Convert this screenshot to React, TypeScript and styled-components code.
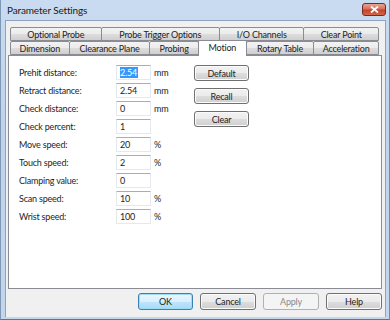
import styled, { createGlobalStyle } from 'styled-components'

const Global = createGlobalStyle`
  html, body {
    margin: 0;
    padding: 0;
    background: #c4d6ec;
  }
  body {
    width: 390px;
    height: 320px;
    overflow: hidden;
    font-family: Lato, 'Liberation Sans', sans-serif;
    font-size: 9px;
    letter-spacing: -0.2px;
    color: #1e1e1e;
  }
`

const Window = styled.div`
  width: 390px;
  height: 320px;
  box-sizing: border-box;
  display: flex;
  flex-direction: column;
  padding: 0 3px 2px 4px;
  background: linear-gradient(to bottom, #c9dbf0 0%, #bfd3ea 40%, #c4d6ec 100%);
  border-left: 1px solid #7f98b6;
  border-bottom: 1px solid #3d7fb3;
  border-right: 1px solid #6f8db0;
`
const TitleBar = styled.div`
  height: 20px;
  flex: none;
  display: flex;
  align-items: center;
  justify-content: space-between;
  padding-left: 2px;
`
const Title = styled.span`
  font-size: 10px;
  letter-spacing: -0.15px;
  color: #1a1a1a;
`
const CloseBtn = styled.div`
  width: 24px;
  height: 13px;
  margin: -2px 0 0 0;
  box-sizing: border-box;
  border: 1px solid #7a2a1f;
  border-radius: 3px;
  background: linear-gradient(to bottom, #e8a493 0%, #d66f5a 45%, #c0442c 55%, #d2674c 100%);
  display: flex;
  align-items: center;
  justify-content: center;
`
const Client = styled.div`
  flex: 1;
  display: flex;
  flex-direction: column;
  background: #f0f0f0;
  border: 1px solid #8ea3bd;
  border-bottom: none;
  padding: 6px 3px 0 2px;
`
const TabRow = styled.div`
  display: flex;
  align-items: flex-end;
  padding: 0 3px 0 2px;
  height: 14px;
`
const Tab = styled.div<{ $w: number; $active?: boolean }>`
  width: ${(p) => p.$w}px;
  height: ${(p) => (p.$active ? 16 : 14)}px;
  margin-bottom: ${(p) => (p.$active ? -1 : 0)}px;
  position: relative;
  z-index: ${(p) => (p.$active ? 2 : 1)};
  box-sizing: border-box;
  display: flex;
  align-items: center;
  justify-content: center;
  padding-bottom: ${(p) => (p.$active ? 2 : 0)}px;
  border: 1px solid #898c95;
  border-bottom: ${(p) => (p.$active ? 'none' : '1px solid #898c95')};
  margin-left: -1px;
  &:first-child {
    margin-left: 0;
  }
  border-radius: 2px 2px 0 0;
  background: ${(p) =>
    p.$active ? '#ffffff' : 'linear-gradient(to bottom, #f3f3f3 0%, #ebebeb 50%, #dddddd 51%, #cfcfcf 100%)'};
  white-space: nowrap;
`
const Panel = styled.div`
  height: 234px;
  box-sizing: border-box;
  background: #fff;
  border: 1px solid #898c95;
  display: flex;
  padding: 9px 10px;
`
const Fields = styled.div`
  display: grid;
  grid-template-columns: 97px 35px 43px;
  grid-auto-rows: 15px;
  row-gap: 3px;
  align-items: center;
`
const Label = styled.span`
  white-space: nowrap;
`
const Field = styled.div`
  height: 15px;
  box-sizing: border-box;
  border: 1px solid #e3e9ef;
  border-top-color: #abadb3;
  background: #fff;
  display: flex;
  align-items: center;
  padding-left: 3px;
`
const Sel = styled.span<{ $on?: boolean }>`
  background: ${(p) => (p.$on ? '#3399ff' : 'transparent')};
  color: ${(p) => (p.$on ? '#fff' : '#1e1e1e')};
  line-height: 11px;
  padding-right: ${(p) => (p.$on ? 1 : 0)}px;
`
const Unit = styled.span`
  padding-left: 3px;
`
const SideButtons = styled.div`
  display: flex;
  flex-direction: column;
  gap: 7px;
`
const Button = styled.div<{ $w: number; $h: number; $default?: boolean; $disabled?: boolean }>`
  width: ${(p) => p.$w}px;
  height: ${(p) => p.$h}px;
  box-sizing: border-box;
  display: flex;
  align-items: center;
  justify-content: center;
  border-radius: 3px;
  border: 1px solid ${(p) => (p.$default ? '#3c7fb1' : p.$disabled ? '#adb2b5' : '#707070')};
  color: ${(p) => (p.$disabled ? '#8a8a8a' : '#1e1e1e')};
  background: ${(p) =>
    p.$disabled
      ? '#f4f4f4'
      : p.$default
        ? 'linear-gradient(to bottom, #eaf6fd 0%, #d9f0fc 50%, #bee6fd 51%, #a7d9f5 100%)'
        : 'linear-gradient(to bottom, #f2f2f2 0%, #ebebeb 50%, #dddddd 51%, #cfcfcf 100%)'};
  box-shadow: inset 0 0 0 1px ${(p) => (p.$default ? '#9fdcf7' : p.$disabled ? '#f4f4f4' : '#fbfbfb')};
`
const Footer = styled.div`
  display: flex;
  justify-content: flex-end;
  gap: 7px;
  padding-top: 4px;
`

const ROW1 = [
  { t: 'Optional Probe', w: 92 },
  { t: 'Probe Trigger Options', w: 120 },
  { t: 'I/O Channels', w: 86 },
  { t: 'Clear Point', w: 76 },
]
const ROW2 = [
  { t: 'Dimension', w: 60 },
  { t: 'Clearance Plane', w: 82 },
  { t: 'Probing', w: 50 },
  { t: 'Motion', w: 49, active: true },
  { t: 'Rotary Table', w: 69 },
  { t: 'Acceleration', w: 66 },
]

const FIELDS = [
  { label: 'Prehit distance:', value: '2.54', unit: 'mm', selected: true },
  { label: 'Retract distance:', value: '2.54', unit: 'mm' },
  { label: 'Check distance:', value: '0', unit: 'mm' },
  { label: 'Check percent:', value: '1', unit: '' },
  { label: 'Move speed:', value: '20', unit: '%' },
  { label: 'Touch speed:', value: '2', unit: '%' },
  { label: 'Clamping value:', value: '0', unit: '' },
  { label: 'Scan speed:', value: '10', unit: '%' },
  { label: 'Wrist speed:', value: '100', unit: '%' },
]

export default function App() {
  return (
    <>
      <Global />
      <Window>
        <TitleBar>
          <Title>Parameter Settings</Title>
          <CloseBtn>
            <svg width="9" height="7" viewBox="0 0 9 7">
              <path d="M1 0.5 L8 6.5 M8 0.5 L1 6.5" stroke="#fff" strokeWidth="1.8" />
            </svg>
          </CloseBtn>
        </TitleBar>
        <Client>
          <TabRow>
            {ROW1.map((t) => (
              <Tab key={t.t} $w={t.w}>
                {t.t}
              </Tab>
            ))}
          </TabRow>
          <TabRow>
            {ROW2.map((t) => (
              <Tab key={t.t} $w={t.w} $active={t.active}>
                {t.t}
              </Tab>
            ))}
          </TabRow>
          <Panel>
            <Fields>
              {FIELDS.map((f) => [
                <Label key={f.label + 'l'}>{f.label}</Label>,
                <Field key={f.label + 'f'}>
                  <Sel $on={f.selected}>{f.value}</Sel>
                </Field>,
                <Unit key={f.label + 'u'}>{f.unit}</Unit>,
              ])}
            </Fields>
            <SideButtons>
              <Button $w={55} $h={16}>Default</Button>
              <Button $w={55} $h={16}>Recall</Button>
              <Button $w={55} $h={16}>Clear</Button>
            </SideButtons>
          </Panel>
          <Footer>
            <Button $w={55} $h={17} $default>OK</Button>
            <Button $w={56} $h={17}>Cancel</Button>
            <Button $w={56} $h={17} $disabled>Apply</Button>
            <Button $w={56} $h={17}>Help</Button>
          </Footer>
        </Client>
      </Window>
    </>
  )
}
